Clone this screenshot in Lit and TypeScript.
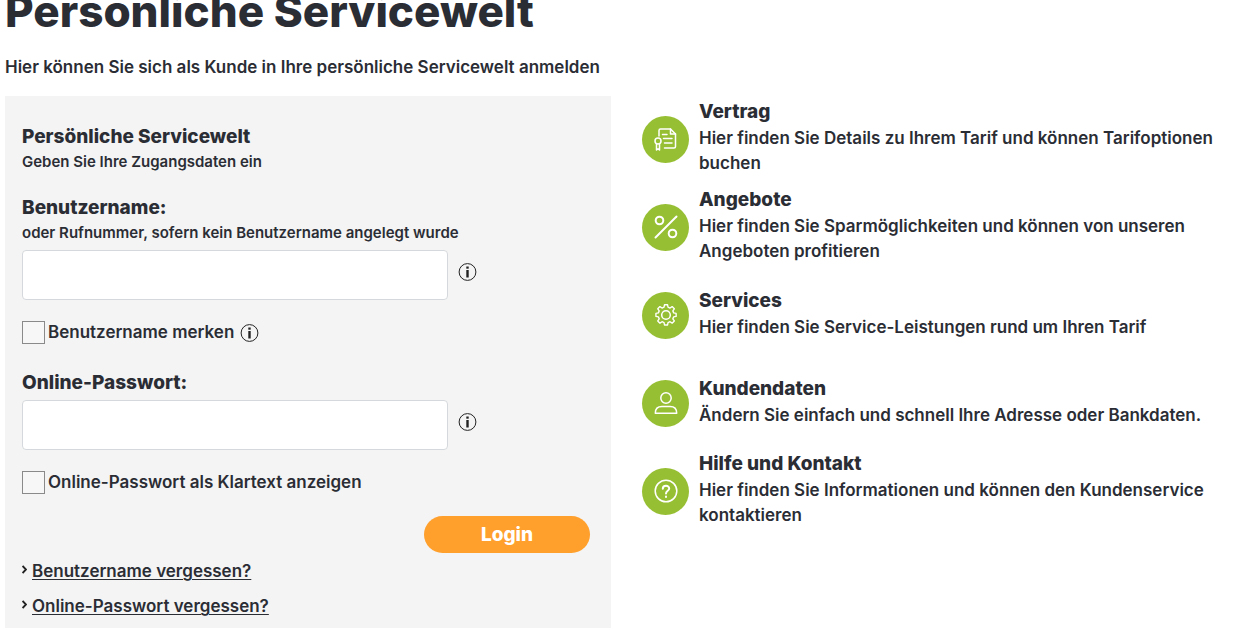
import { LitElement, html, css, svg } from "lit";
import { customElement, state } from "lit/decorators.js";

const glyphs = {
  contract: svg`
    <path d="M6 10V4.500Q6 3 7.500 3H17.500L22.500 8V20.500Q22.500 22 21 22H11.500" />
    <path d="M17.500 3V8H22.500M9.500 8.500H14M10.500 12.500H19M11.500 17H19" />
    <circle cx="5" cy="15" r="3" />
    <path d="M3.500 18V24L5 22.800L6.500 24V18" />`,
  percent: svg`
    <circle cx="6.500" cy="6.500" r="3.800" stroke-width="2" />
    <circle cx="19.500" cy="19.500" r="3.800" stroke-width="2" />
    <path d="M23.500 2.500L2.500 23.500" stroke-width="2" />`,
  gear: svg`
    <circle cx="13" cy="13" r="4.300" />
    <path d="M11.300 2.500h3.400l.5 2.700 2.200.9 2.300-1.600 2.400 2.400-1.600 2.300.9 2.200 2.700.5v3.400l-2.700.5-.9 2.200 1.600 2.300-2.400 2.400-2.300-1.600-2.200.9-.5 2.700h-3.400l-.5-2.700-2.200-.9-2.300 1.600-2.400-2.400 1.600-2.300-.9-2.200-2.700-.5v-3.400l2.700-.5.9-2.200-1.600-2.300 2.400-2.400 2.300 1.600 2.200-.9z" transform="translate(1.200 .5) scale(.91)" />`,
  person: svg`
    <circle cx="13" cy="8" r="5.200" />
    <path d="M2.300 23.200C2.300 18.500 5.500 16.500 9 16.500H17C20.500 16.500 23.700 18.500 23.700 23.200Z" />`,
  question: svg`
    <circle cx="13" cy="13" r="10.800" />
    <path d="M9.800 10.800C9.800 6.800 16.200 6.800 16.200 10.500C16.200 12.800 13 12.900 13 15.500" stroke-width="2" />
    <path d="M13 18.500V19" stroke-width="2" />`,
};

interface Feature {
  icon: keyof typeof glyphs;
  title: string;
  text: string;
}

const features: Feature[] = [
  { icon: "contract", title: "Vertrag", text: "Hier finden Sie Details zu Ihrem Tarif und können Tarifoptionen buchen" },
  { icon: "percent", title: "Angebote", text: "Hier finden Sie Sparmöglichkeiten und können von unseren Angeboten profitieren" },
  { icon: "gear", title: "Services", text: "Hier finden Sie Service-Leistungen rund um Ihren Tarif" },
  { icon: "person", title: "Kundendaten", text: "Ändern Sie einfach und schnell Ihre Adresse oder Bankdaten." },
  { icon: "question", title: "Hilfe und Kontakt", text: "Hier finden Sie Informationen und können den Kundenservice kontaktieren" },
];

@customElement("app-root")
export class AppRoot extends LitElement {
  @state() private plain = false;

  static styles = css`
    :host {
      display: block;
      height: 100vh;
      overflow: hidden;
      background: #fff;
      color: #2b2d35;
      font: 600 17px/25px Inter, sans-serif;
    }
    * { box-sizing: border-box; }
    h1, h2, h3, p, ul { margin: 0; padding: 0; }
    .page { padding: 0 8px 0 5px; }
    .title { font-size: 44px; line-height: 54px; font-weight: 800; margin-top: -16px; }
    .intro { margin-top: 17px; }
    .columns {
      display: grid;
      grid-template-columns: 1fr 1fr;
      gap: 31px;
      margin-top: 16px;
    }
    .panel { background: #f4f4f4; padding: 28px 21px 28px 17px; }
    .heading { display: block; font-size: 19px; line-height: 25px; font-weight: 800; }
    .small { font-size: 15px; }
    .block { margin-top: 21px; }
    .password { margin-top: 25px; }
    .field { display: flex; gap: 10px; margin-top: 5px; }
    .input {
      width: 75%;
      height: 50px;
      padding: 0 12px;
      border: 1px solid #d5d9dd;
      border-radius: 4px;
      background: #fff;
      font: inherit;
      color: inherit;
    }
    .info {
      width: 20px;
      height: 20px;
      padding: 0;
      border: 0;
      background: none;
      cursor: pointer;
    }
    .info svg { display: block; }
    .field .info { margin-top: 12px; }
    .check { display: flex; align-items: center; margin-top: 20px; }
    .check .info { margin-left: 6px; }
    .box {
      appearance: none;
      width: 23px;
      height: 23px;
      margin: 0 3px 0 0;
      border: 1px solid #8a8a8a;
      background: #f7f7f7;
    }
    .box:checked { background: #97bf33; }
    .actions { display: flex; justify-content: flex-end; margin-top: 21px; }
    .login {
      width: 166px;
      height: 37px;
      padding: 0;
      border: 0;
      border-radius: 19px;
      background: #ff9f2c;
      color: #fff;
      font: 800 19px/25px Inter, sans-serif;
      cursor: pointer;
    }
    .links { list-style: none; display: grid; gap: 10px; margin-top: 6px; }
    .links li { display: flex; gap: 5px; }
    .links svg { margin-top: 6px; }
    a { color: inherit; text-underline-offset: 2px; text-decoration-thickness: 1px; }
    .features { list-style: none; display: grid; gap: 4px; align-content: start; padding-top: 1px; }
    .feature { display: flex; align-items: center; gap: 10px; min-height: 84px; }
    .feature .heading { line-height: 28px; }
    .copy { padding-bottom: 4px; }
    .badge {
      flex: none;
      display: grid;
      place-items: center;
      width: 47px;
      height: 47px;
      border-radius: 50%;
      background: #97bf33;
    }
  `;

  private info(label: string) {
    return html`<button class="info" type="button" aria-label=${label}>
      <svg width="20" height="20" viewBox="0 0 20 20" fill="none" stroke="#222">
        <circle cx="9.500" cy="10" r="8.400" stroke-width="1" />
        <path d="M9.500 8V15.500" stroke-width="2.400" />
        <path d="M9.500 4.500V6.700" stroke-width="2.400" />
      </svg>
    </button>`;
  }

  private link(text: string) {
    return html`<li>
      <svg width="5" height="9" viewBox="0 0 5 9" fill="none" stroke="#222" stroke-width="1.800" aria-hidden="true">
        <path d="M.6 1L4 4.500L.6 8" />
      </svg>
      <a href="#">${text}</a>
    </li>`;
  }

  render() {
    return html`
      <main class="page">
        <h1 class="title">Persönliche Servicewelt</h1>
        <p class="intro">Hier können Sie sich als Kunde in Ihre persönliche Servicewelt anmelden</p>
        <div class="columns">
          <form class="panel" @submit=${(e: Event) => e.preventDefault()}>
            <h2 class="heading">Persönliche Servicewelt</h2>
            <p class="small">Geben Sie Ihre Zugangsdaten ein</p>

            <div class="block">
              <label class="heading" for="user">Benutzername:</label>
              <p class="small" id="user-hint">oder Rufnummer, sofern kein Benutzername angelegt wurde</p>
              <div class="field">
                <input class="input" id="user" type="text" aria-describedby="user-hint" autocomplete="username" />
                ${this.info("Hinweis zum Benutzernamen")}
              </div>
            </div>
            <div class="check">
              <input class="box" id="remember" type="checkbox" />
              <label for="remember">Benutzername merken</label>
              ${this.info("Hinweis zum Merken")}
            </div>

            <div class="password">
              <label class="heading" for="password">Online-Passwort:</label>
              <div class="field">
                <input class="input" id="password" type=${this.plain ? "text" : "password"} autocomplete="current-password" />
                ${this.info("Hinweis zum Online-Passwort")}
              </div>
            </div>
            <div class="check">
              <input
                class="box"
                id="plain"
                type="checkbox"
                .checked=${this.plain}
                @change=${(e: Event) => (this.plain = (e.target as HTMLInputElement).checked)}
              />
              <label for="plain">Online-Passwort als Klartext anzeigen</label>
            </div>

            <div class="actions"><button class="login" type="submit">Login</button></div>
            <ul class="links">
              ${this.link("Benutzername vergessen?")}
              ${this.link("Online-Passwort vergessen?")}
            </ul>
          </form>

          <ul class="features">
            ${features.map(
              (f) => html`<li class="feature">
                <span class="badge">
                  <svg width="26" height="26" viewBox="0 0 26 26" fill="none" stroke="#fff" stroke-width="1.500" stroke-linecap="round" stroke-linejoin="round" aria-hidden="true">
                    ${glyphs[f.icon]}
                  </svg>
                </span>
                <div class="copy">
                  <h3 class="heading">${f.title}</h3>
                  <p>${f.text}</p>
                </div>
              </li>`
            )}
          </ul>
        </div>
      </main>
    `;
  }
}
